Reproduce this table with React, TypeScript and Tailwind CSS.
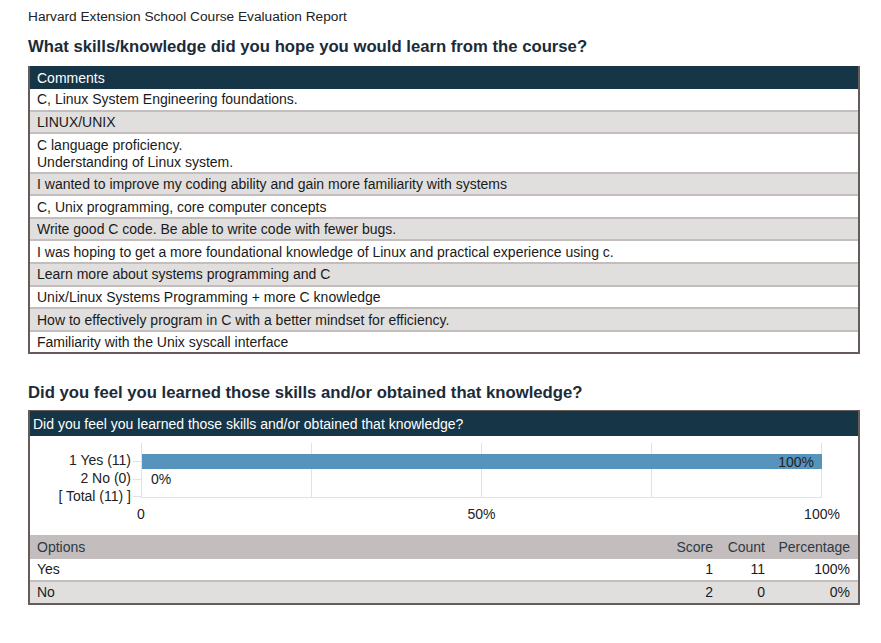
import React from "react"

const comments = [
  ["C, Linux System Engineering foundations."],
  ["LINUX/UNIX"],
  ["C language proficiency.", "Understanding of Linux system."],
  ["I wanted to improve my coding ability and gain more familiarity with systems"],
  ["C, Unix programming, core computer concepts"],
  ["Write good C code. Be able to write code with fewer bugs."],
  ["I was hoping to get a more foundational knowledge of Linux and practical experience using c."],
  ["Learn more about systems programming and C"],
  ["Unix/Linux Systems Programming + more C knowledge"],
  ["How to effectively program in C with a better mindset for efficiency."],
  ["Familiarity with the Unix syscall interface"],
]

const options = [
  { label: "Yes", score: 1, count: 11, pct: "100%" },
  { label: "No", score: 2, count: 0, pct: "0%" },
]

function Chart() {
  return (
    <div className="flex h-[99px] pt-[7px] text-[14px] text-[#222]">
      {/* category labels + ticks */}
      <div className="flex w-[111px] flex-col items-end pt-[9px] leading-[17.8px]">
        {["1 Yes (11)", "2 No (0)", "[ Total (11) ]"].map((t) => (
          <div key={t} className="flex items-center">
            <span>{t}</span>
            <span className="ml-[2px] h-px w-[8px] bg-[#e2e2e2]" />
          </div>
        ))}
      </div>

      {/* plot */}
      <div className="flex w-[700px] flex-col">
        <div className="relative h-[55px] w-[681px] border-b border-l border-[#e2e2e2]">
          <div className="absolute inset-0 grid grid-cols-4">
            <div className="border-r border-[#e2e2e2]" />
            <div className="border-r border-[#e2e2e2]" />
            <div className="border-r border-[#e2e2e2]" />
            <div className="border-r border-[#e2e2e2]" />
          </div>
          <div className="relative mt-[11px] flex h-[15px] w-[680px] items-center justify-end bg-[#5694be] pr-[8px] leading-none">
            100%
          </div>
          <div className="relative pl-[9px] pt-[2px] leading-[16px]">0%</div>
        </div>
        <div className="mt-[8px] flex w-[681px] justify-between leading-[16px]">
          <div className="flex w-0 justify-center">0</div>
          <div className="flex w-0 justify-center">50%</div>
          <div className="flex w-0 justify-center">100%</div>
        </div>
      </div>
    </div>
  )
}

export default function App() {
  return (
    <div className="min-h-[643px] w-[881px] bg-white pl-[28px] pt-[9px] font-['Liberation_Sans',Arial,sans-serif] text-[#1a1a1a]">
      <div className="text-[13.7px] leading-[16px] text-[#222]">Harvard Extension School Course Evaluation Report</div>

      <h2 className="mt-[12px] text-[16.7px] font-bold leading-[20px] text-[#1b2b39]">
        What skills/knowledge did you hope you would learn from the course?
      </h2>

      {/* comments table */}
      <div className="mt-[9px] w-[832px] border-x-2 border-b-2 border-[#655c5a] text-[14px]">
        <div className="h-[23px] bg-[#163547] pl-[7px] pt-[1px] leading-[22px] text-white">Comments</div>
        {comments.map((lines, i) => (
          <div
            key={i}
            className={`pl-[7px] pt-[2.4px] pb-[1.2px] leading-[17px] ${i > 0 ? "border-t-2 border-[#c3bebd]" : ""} ${
              i % 2 === 1 ? "bg-[#e0dfde]" : "bg-white"
            }`}
          >
            {lines.map((l) => (
              <div key={l}>{l}</div>
            ))}
          </div>
        ))}
      </div>

      <h2 className="mt-[29px] text-[16.7px] font-bold leading-[20px] text-[#1b2b39]">
        Did you feel you learned those skills and/or obtained that knowledge?
      </h2>

      {/* rating table */}
      <div className="mt-[7px] w-[832px] border-x-2 border-b-2 border-t border-[#655c5a] text-[14px]">
        <div className="h-[25px] bg-[#163547] pl-[3px] pt-[2px] leading-[23px] text-white">
          Did you feel you learned those skills and/or obtained that knowledge?
        </div>
        <Chart />
        <div className="flex h-[24px] items-center bg-[#c3bdbd] pl-[7px] pr-[8px] text-[#2b3a46]">
          <div className="flex-1">Options</div>
          <div className="w-[50px] text-right">Score</div>
          <div className="w-[52px] text-right">Count</div>
          <div className="w-[85px] text-right">Percentage</div>
        </div>
        {options.map((o, i) => (
          <div
            key={o.label}
            className={`flex items-center pl-[7px] pr-[8px] ${
              i > 0 ? "h-[23px] border-t-2 border-[#c3bdbd] bg-[#e0dfde]" : "h-[21px] bg-white"
            }`}
          >
            <div className="flex-1">{o.label}</div>
            <div className="w-[50px] text-right">{o.score}</div>
            <div className="w-[52px] text-right">{o.count}</div>
            <div className="w-[85px] text-right">{o.pct}</div>
          </div>
        ))}
      </div>
    </div>
  )
}
